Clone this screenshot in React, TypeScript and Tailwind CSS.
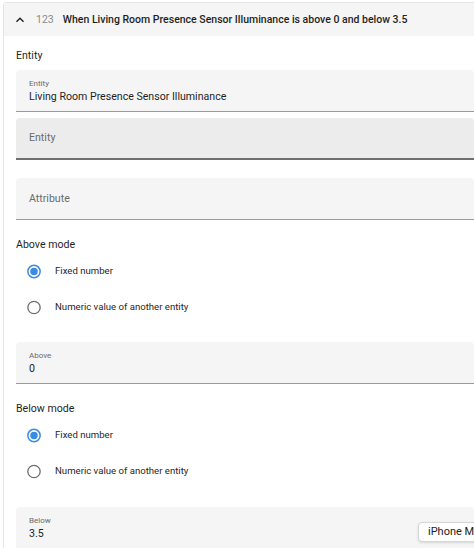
import React from "react";

function Field({ label, value, hover }: { label: string; value?: string; hover?: boolean }) {
  return (
    <div
      className={`h-[42px] ${hover ? "bg-[#ececec] border-b-2 border-[#6f6f6f]" : "bg-[#f5f5f5] border-b border-[#9a9a9a]"} rounded-t-[4px] pl-[13px] flex flex-col justify-center`}
    >
      {value !== undefined ? (
        <>
          <div className="text-[8px] leading-[10px] text-[#6b6b6b] mt-[2px]">{label}</div>
          <div className="text-[10.6px] leading-[16px] text-[#1f1f1f]">{value}</div>
        </>
      ) : (
        <div className="text-[10.6px] leading-[14px] text-[#6b6b6b]">{label}</div>
      )}
    </div>
  );
}

function Radio({ checked, label }: { checked?: boolean; label: string }) {
  return (
    <div className="h-[36px] flex items-center pl-[11px]">
      <div className="w-[14px] flex items-center justify-center">
        {checked ? (
          <svg width="15" height="15" viewBox="0 0 15 15">
            <circle cx="7.5" cy="7.5" r="6.6" fill="none" stroke="#3a8be3" strokeWidth="1.6" />
            <circle cx="7.5" cy="7.5" r="4" fill="#3a8be3" />
          </svg>
        ) : (
          <svg width="15" height="15" viewBox="0 0 15 15">
            <circle cx="7.5" cy="7.5" r="6.6" fill="none" stroke="#6d6d6d" strokeWidth="1.4" />
          </svg>
        )}
      </div>
      <div className="ml-[14px] text-[9.6px] text-[#1f1f1f]">{label}</div>
    </div>
  );
}

export default function App() {
  return (
    <div
      className="w-[474px] h-[548px] bg-white overflow-hidden relative"
      style={{ fontFamily: "Roboto, 'Liberation Sans', sans-serif" }}
    >
      <div className="ml-[3px] mt-[2px] border-l border-t border-[#e4e4e4] rounded-tl-[4px] h-[560px]">
        <div className="h-[33px] bg-[#f5f5f5] flex items-center pl-[8px]">
          <svg width="16" height="16" viewBox="0 0 24 24" className="text-[#1f1f1f]">
            <path d="M7.41 15.41L12 10.83l4.59 4.58L18 14l-6-6-6 6z" fill="currentColor" />
          </svg>
          <span className="ml-[8px] text-[10.5px] text-[#8a8a8a]">123</span>
          <span className="ml-[9px] text-[10.5px] font-medium text-[#1f1f1f]">
            When Living Room Presence Sensor Illuminance is above 0 and below 3.5
          </span>
        </div>
        <div className="pl-[12px]">
          <div className="h-[34px] flex items-center pt-[6px] text-[10.6px] text-[#1f1f1f]">Entity</div>
          <Field label="Entity" value="Living Room Presence Sensor Illuminance" />
          <div className="h-[6px]" />
          <Field label="Entity" hover />
          <div className="h-[18px]" />
          <Field label="Attribute" />
          <div className="h-[33px] flex items-end text-[10.6px] text-[#1f1f1f]">Above mode</div>
          <Radio checked label="Fixed number" />
          <Radio label="Numeric value of another entity" />
          <div className="h-[17px]" />
          <Field label="Above" value="0" />
          <div className="h-[33px] flex items-end text-[10.6px] text-[#1f1f1f]">Below mode</div>
          <Radio checked label="Fixed number" />
          <Radio label="Numeric value of another entity" />
          <div className="h-[18px]" />
          <Field label="Below" value="3.5" />
        </div>
      </div>
      <div className="absolute left-[418px] top-[522px] h-[20px] pl-[9px] pr-[4px] bg-white border border-[#d6d6d6] rounded-[4px] shadow-sm flex items-center text-[11px] text-[#222] whitespace-nowrap">
        iPhone Mini
      </div>
    </div>
  );
}
